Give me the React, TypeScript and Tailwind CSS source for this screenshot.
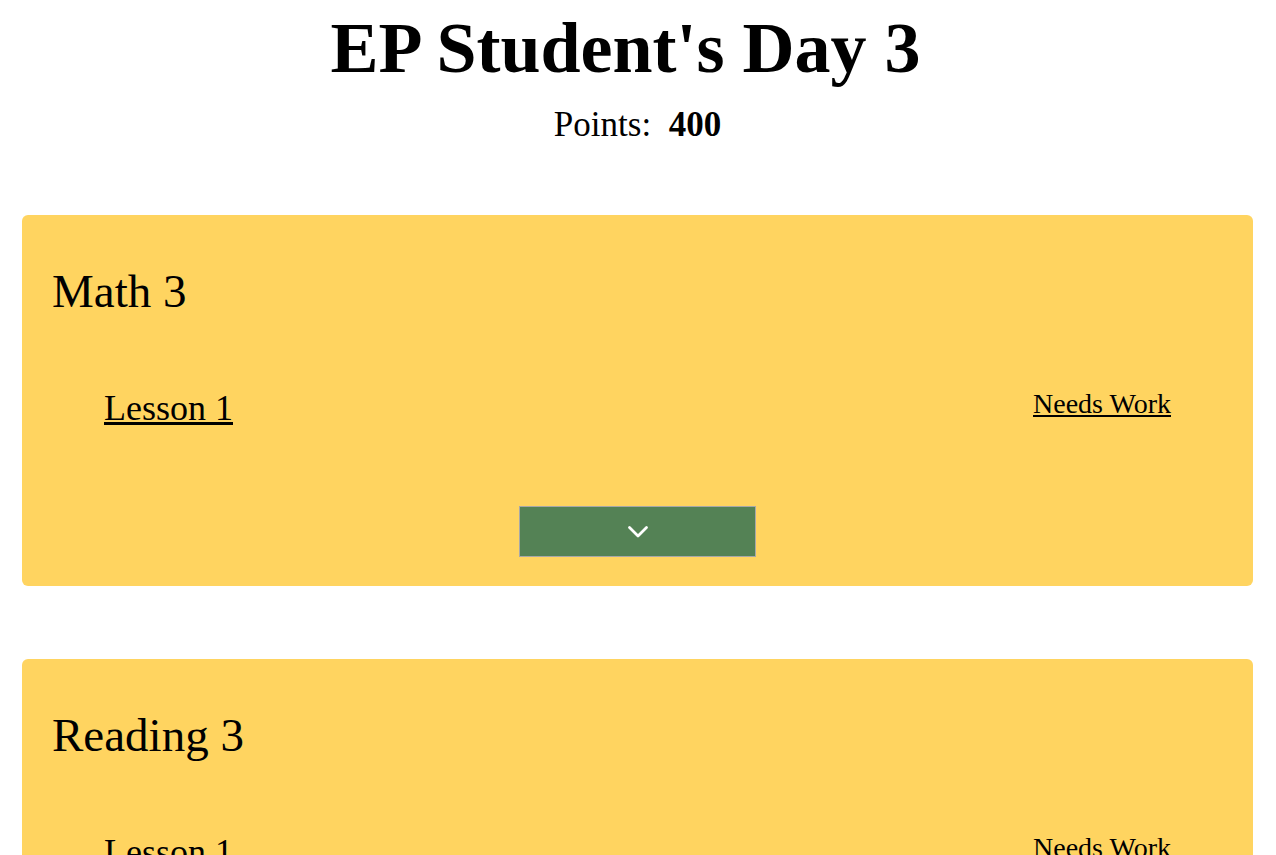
const subjects = [
  { name: "Math 3", lessons: [{ title: "Lesson 1", status: "Needs Work" }] },
  { name: "Reading 3", lessons: [{ title: "Lesson 1", status: "Needs Work" }] },
]

function Chevron() {
  return (
    <svg width="22" height="14" viewBox="0 0 22 14" fill="none">
      <polyline points="2.5,2.5 11,11 19.5,2.5" stroke="white" strokeWidth="2.8" strokeLinecap="round" strokeLinejoin="round" />
    </svg>
  )
}

function SubjectCard({ name, lessons }: { name: string; lessons: { title: string; status: string }[] }) {
  return (
    <section className="rounded-md bg-[#ffd460] pt-[53px] pb-[29px]">
      <h2 className="pl-[30px] text-[47px] leading-none font-normal">{name}</h2>
      {lessons.map((l) => (
        <div key={l.title} className="mt-[75px] flex items-start justify-between pl-[82px] pr-[82px]">
          <a href="#" className="text-[36px] leading-none underline">
            {l.title}
          </a>
          <a href="#" className="text-[28px] leading-none underline">
            {l.status}
          </a>
        </div>
      ))}
      <div className="mt-[80px] flex justify-center">
        <button className="flex h-[51px] w-[237px] items-center justify-center border border-[#a8a8a8] bg-[#548255]">
          <Chevron />
        </button>
      </div>
    </section>
  )
}

export default function App() {
  return (
    <div className="min-h-screen bg-white pl-[22px] pr-[23px] pt-[12px] pb-10 text-black" style={{ fontFamily: '"Liberation Serif", "Times New Roman", serif' }}>
      <h1 className="pr-[24px] text-center text-[72px] leading-none font-bold">EP Student's Day 3</h1>
      <p className="mt-[23px] text-center text-[35px] leading-none">
        Points:&nbsp; <span className="font-bold">400</span>
      </p>
      <div className="mt-[73px] flex flex-col gap-[73px]">
        {subjects.map((s) => (
          <SubjectCard key={s.name} name={s.name} lessons={s.lessons} />
        ))}
      </div>
    </div>
  )
}
